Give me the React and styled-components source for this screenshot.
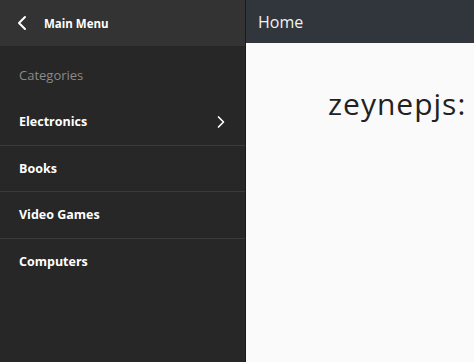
import styled, { createGlobalStyle } from 'styled-components'
import { ChevronLeft, ChevronRight } from 'lucide-react'

const GlobalStyle = createGlobalStyle`
   html, body {
      margin: 0;
      padding: 0;
      height: 100%;
   }
   body {
      font-family: "Open Sans", "Noto Sans", sans-serif;
   }
   #root {
      height: 100%;
   }
`

const Layout = styled.div`
   display: flex;
   height: 100vh;
   overflow: hidden;
`

// 왼쪽 사이드 메뉴
const Sidebar = styled.nav`
   width: 245px;
   flex-shrink: 0;
   background-color: #272727;
   border-right: 1px solid #1a1a1a;
   display: flex;
   flex-direction: column;
`

const SidebarHeader = styled.div`
   height: 46px;
   display: flex;
   align-items: center;
   gap: 10px;
   padding: 0 0 0 10px;
   background-color: #333333;
   color: #ffffff;
   font-size: 11.5px;
   font-weight: 700;
`

const Label = styled.div`
   height: 53px;
   display: flex;
   align-items: center;
   padding: 4px 19px 0;
   box-sizing: border-box;
   color: #8a8a8a;
   font-size: 13px;
`

const Item = styled.div`
   height: 45.5px;
   display: flex;
   align-items: center;
   justify-content: space-between;
   padding: 0 14px 0 19px;
   color: #ffffff;
   font-size: 12.5px;
   font-weight: 700;
   border-bottom: ${(props) => (props.last ? 'none' : '1px solid #3a3a3a')};
`

const Main = styled.main`
   flex: 1;
   display: flex;
   flex-direction: column;
   background-color: #fafafa;
`

const TopBar = styled.header`
   height: 43px;
   display: flex;
   align-items: center;
   padding-left: 12px;
   background-color: #31363d;
   color: #f2f2f2;
   font-size: 16px;
`

const Title = styled.h1`
   margin: 40px 0 0 82px;
   font-size: 30px;
   font-weight: 500;
   letter-spacing: 1px;
   color: #222222;
   white-space: nowrap;
`

const items = ['Electronics', 'Books', 'Video Games', 'Computers']

function App() {
   return (
      <Layout>
         <GlobalStyle />
         <Sidebar>
            <SidebarHeader>
               <ChevronLeft size={24} strokeWidth={2} />
               Main Menu
            </SidebarHeader>
            <Label>Categories</Label>
            {items.map((name, i) => (
               <Item key={name} last={i === items.length - 1}>
                  {name}
                  {i === 0 && <ChevronRight size={20} strokeWidth={2} />}
               </Item>
            ))}
         </Sidebar>
         <Main>
            <TopBar>Home</TopBar>
            <Title>zeynepjs:</Title>
         </Main>
      </Layout>
   )
}

export default App
